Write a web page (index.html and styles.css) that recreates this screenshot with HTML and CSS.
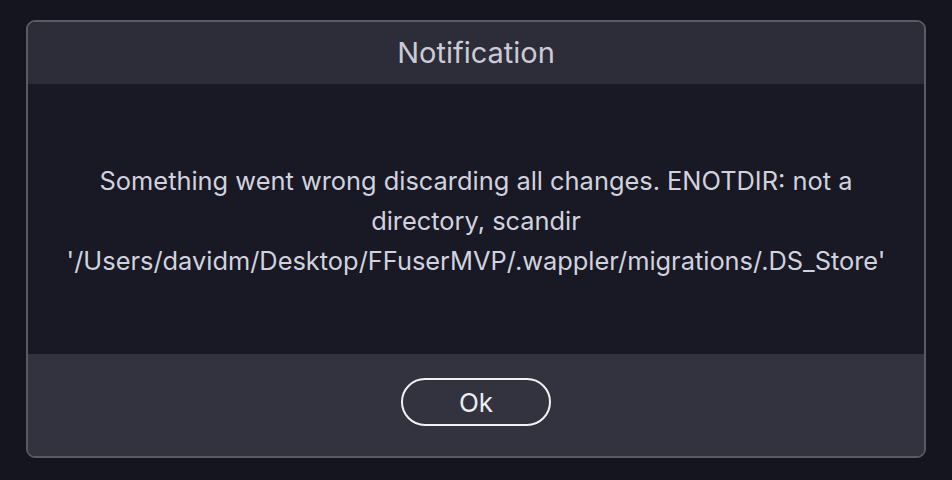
FILE: index.html
```html
<!DOCTYPE html>
<html>
<head>
<meta charset="utf-8">
<link rel="stylesheet" href="styles.css">
</head>
<body>
<div class="dialog">
  <div class="header">Notification</div>
  <div class="content">
    <p class="message">Something went wrong discarding all changes. ENOTDIR: not a directory, scandir '/Users/davidm/Desktop/FFuserMVP/.wappler/migrations/.DS_Store'</p>
  </div>
  <div class="footer">
    <button class="ok">Ok</button>
  </div>
</div>
</body>
</html>
```
FILE: styles.css
```css
html, body {
  margin: 0;
  padding: 0;
  height: 100%;
}
body {
  background: #14151e;
  font-family: Inter, "Noto Sans", sans-serif;
  padding: 20px 26px 0 26px;
  box-sizing: border-box;
}
.dialog {
  width: 900px;
  height: 438px;
  box-sizing: border-box;
  border: 2px solid #5b5b67;
  border-radius: 9px;
  overflow: hidden;
  display: flex;
  flex-direction: column;
  background: #181924;
}
.header {
  height: 62px;
  flex: none;
  background: #2d2d3a;
  color: #cbcbd7;
  font-size: 29px;
  display: flex;
  align-items: center;
  justify-content: center;
  padding-bottom: 2px;
  box-sizing: border-box;
}
.content {
  height: 270px;
  flex: none;
  display: flex;
  align-items: center;
  justify-content: center;
  padding: 4px 38px 0 38px;
  box-sizing: border-box;
}
.message {
  margin: 0;
  text-align: center;
  color: #d2d2de;
  font-size: 25.4px;
  line-height: 40px;
}
.footer {
  flex: 1;
  background: #33333f;
  display: flex;
  align-items: center;
  justify-content: center;
}
.ok {
  width: 150px;
  height: 48px;
  border: 2px solid #f2f2f6;
  border-radius: 24px;
  background: transparent;
  color: #ededf2;
  font-family: Inter, "Noto Sans", sans-serif;
  font-size: 26px;
  padding: 0;
  margin-bottom: 6px;
}
```
